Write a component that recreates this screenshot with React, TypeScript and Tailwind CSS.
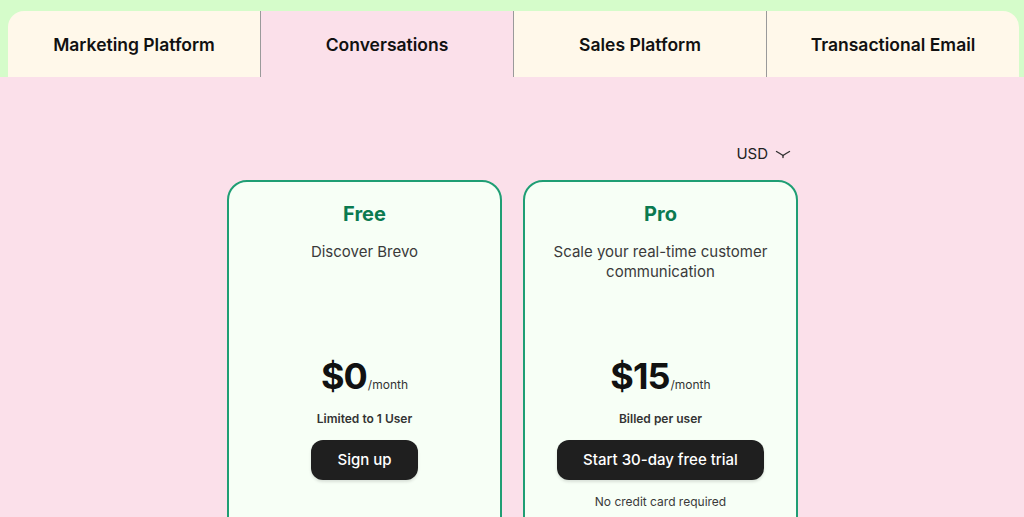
import React from "react";

const tabs = ["Marketing Platform", "Conversations", "Sales Platform", "Transactional Email"];

function Chevron() {
  return (
    <svg width="16" height="10" viewBox="0 0 16 10" fill="none" stroke="#333" strokeWidth="1.4" strokeLinecap="round" strokeLinejoin="round">
      <path d="M1.5 2.5 Q5 4.5 8 6.5 Q11 4.5 14.5 2.5" />
      <path d="M8 6.5 L8 8.5" />
    </svg>
  );
}

type Plan = {
  name: string;
  desc: string[];
  price: string;
  note: string;
  cta: string;
  foot?: string;
};

const plans: Plan[] = [
  { name: "Free", desc: ["Discover Brevo"], price: "$0", note: "Limited to 1 User", cta: "Sign up" },
  {
    name: "Pro",
    desc: ["Scale your real-time customer", "communication"],
    price: "$15",
    note: "Billed per user",
    cta: "Start 30-day free trial",
    foot: "No credit card required",
  },
];

function Card({ p }: { p: Plan }) {
  return (
    <div className="w-[275px] h-[380px] rounded-[20px] border-2 border-[#1f9e74] bg-[#f7fff6] flex flex-col items-center pt-[18px]">
      <div className="text-[20px] leading-[28px] font-bold text-[#0b7a50]">{p.name}</div>
      <div className="mt-[14px] h-[116px] text-center text-[15px] leading-[20px] text-[#3a3a3a]">
        {p.desc.map((d) => (
          <div key={d}>{d}</div>
        ))}
      </div>
      <div className="flex items-baseline h-[36px] leading-[36px]">
        <span className="text-[36px] font-bold tracking-[-1px] text-[#111]">{p.price}</span>
        <span className="text-[12px] text-[#333] ml-[1px]">/month</span>
      </div>
      <div className="mt-[17px] text-[12px] leading-[16px] font-semibold text-[#333]">{p.note}</div>
      <button className="mt-[13px] h-[40px] px-[26px] rounded-[12px] bg-[#1f1f1f] text-white text-[15px] font-medium shadow-[0_2px_3px_rgba(0,0,0,0.12)]">
        {p.cta}
      </button>
      {p.foot && <div className="mt-[13px] text-[12px] leading-[18px] text-[#3a3a3a]">{p.foot}</div>}
    </div>
  );
}

export default function App() {
  return (
    <div className="w-[1024px] h-[517px] overflow-hidden bg-[#fbe0ea] font-['Inter',sans-serif]">
      <div className="bg-[#d5fcca] pt-[11px] px-[8px] pr-[5px]">
        <div className="flex h-[66px] rounded-t-[16px] overflow-hidden">
          {tabs.map((t, i) => (
            <div
              key={t}
              className={
                "flex-1 flex items-center justify-center pt-[3px] text-[17.5px] font-semibold text-[#111] " +
                (i === 1 ? "bg-[#fbe0ea] " : "bg-[#fff8ea] ") +
                (i > 0 ? "border-l border-[#9a9a9a]" : "")
              }
            >
              {t}
            </div>
          ))}
        </div>
      </div>
      <div className="w-[572px] mx-auto pl-[1px]">
        <div className="mt-[67px] h-[20px] flex items-center justify-end gap-[7px] pr-[7px] text-[15px] text-[#222]">
          <span>USD</span>
          <Chevron />
        </div>
        <div className="mt-[16px] flex gap-[21px]">
          {plans.map((p) => (
            <Card key={p.name} p={p} />
          ))}
        </div>
      </div>
    </div>
  );
}
